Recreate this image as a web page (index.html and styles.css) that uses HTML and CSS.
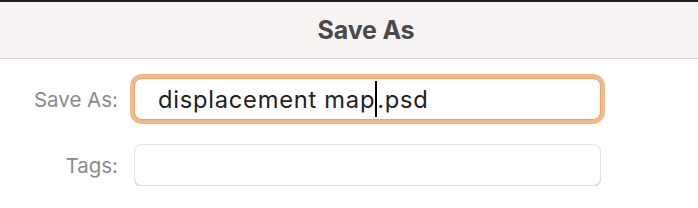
FILE: index.html
```html
<!DOCTYPE html>
<html lang="en">
<head>
<meta charset="utf-8">
<title>Save As</title>
<link rel="stylesheet" href="styles.css">
</head>
<body>
<div class="topbar"></div>
<header class="titlebar"><h1 class="title">Save As</h1></header>
<main class="form">
  <label class="label" for="name">Save As:</label>
  <div class="field field--focus" id="name"><span class="value">displacement map</span><span class="caret"></span><span class="value">.psd</span></div>
  <label class="label" for="tags">Tags:</label>
  <div class="field" id="tags"></div>
</main>
</body>
</html>
```
FILE: styles.css
```css
html, body {
  margin: 0;
  padding: 0;
  background: #ffffff;
  font-family: Inter, "Noto Sans", "Liberation Sans", sans-serif;
}
.topbar {
  height: 2px;
  background: #1e1e1e;
}
.titlebar {
  height: 56px;
  background: #f9f4f4;
  border-bottom: 1px solid #dcd9d9;
  display: flex;
  align-items: center;
  justify-content: center;
}
.title {
  margin: 0 0 1px 0;
  font-size: 25px;
  font-weight: 700;
  color: #4a4a4a;
  padding-left: 34px;
  letter-spacing: -0.2px;
}
.form {
  display: grid;
  grid-template-columns: 118px 467px;
  column-gap: 16px;
  row-gap: 24px;
  padding-top: 19px;
  align-items: center;
}
.label {
  justify-self: end;
  font-size: 20.5px;
  color: #8a8a8a;
}
.field {
  box-sizing: border-box;
  height: 42px;
  border-radius: 8px;
  background: #fff;
  border: 1px solid #e3e3e3;
  box-shadow: 0 1px 0 #d2d2d2;
  display: flex;
  align-items: center;
  padding-left: 23px;
}
.field--focus {
  border-color: #e4a678;
  box-shadow: 0 0 0 4px #f3b988;
}
.value {
  font-size: 23.7px;
  letter-spacing: 0.75px;
  color: #222;
  white-space: pre;
}
.caret {
  width: 2px;
  height: 36px;
  background: #000;
}
```
